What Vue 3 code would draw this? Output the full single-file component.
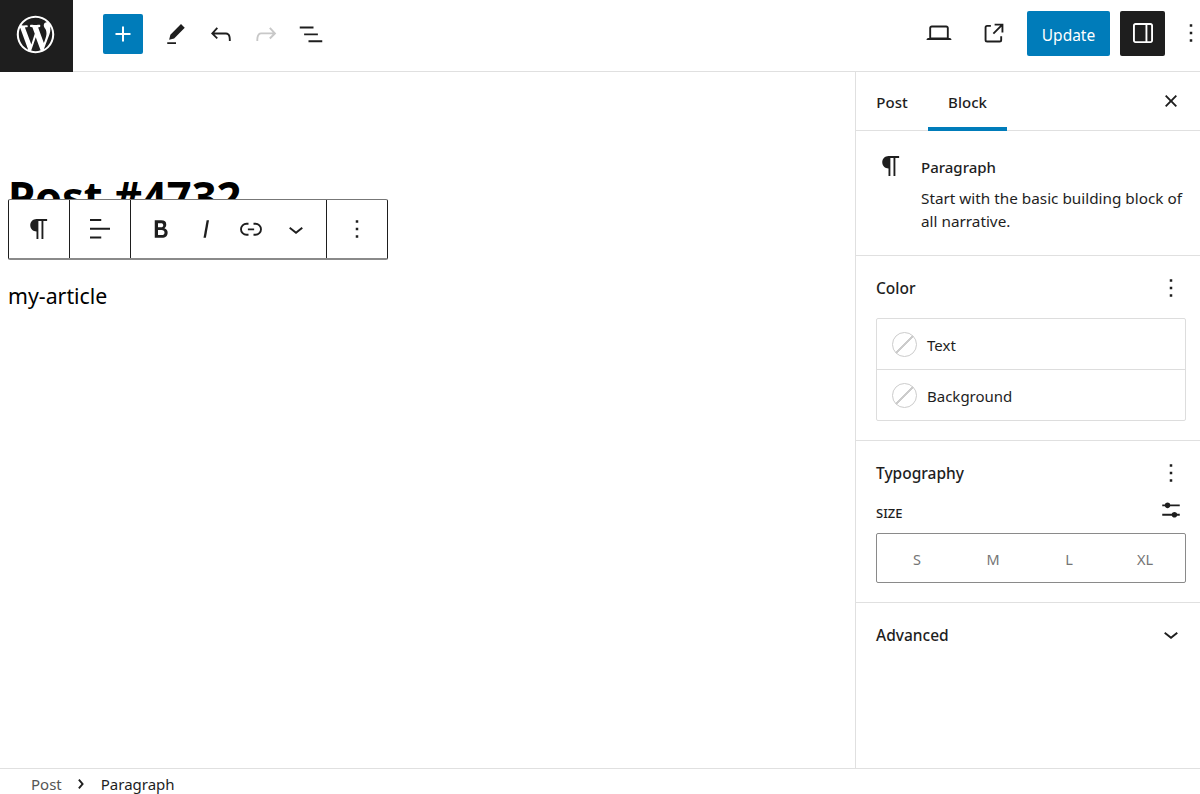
<script setup>
const sizes = ['S', 'M', 'L', 'XL']
const colors = ['Text', 'Background']
const dots = 'M13 19h-2v-2h2v2zm0-6h-2v-2h2v2zm0-6h-2V5h2v2z'
const chevron = 'M17.5 11.6L12 16l-5.5-4.4.9-1.2L12 14l4.5-3.6 1 1.2z'
const para = 'm9.99609 14v-.2251l.00391.0001v6.225h1.5v-14.5h2.5v14.5h1.5v-14.5h3v-1.5h-8.50391c-2.76142 0-5 2.23858-5 5 0 2.7614 2.23858 5 5 5z'
</script>

<template>
  <div class="app">
    <header class="top">
      <div class="logo">
        <svg width="45" height="45" viewBox="-2 -2 24 24" fill="#fff"><path d="M20 10c0-5.51-4.49-10-10-10C4.48 0 0 4.49 0 10c0 5.52 4.48 10 10 10 5.51 0 10-4.48 10-10zM7.78 15.37L4.37 6.22c.55-.02 1.17-.08 1.17-.08.5-.06.44-1.13-.06-1.11 0 0-1.45.11-2.37.11-.18 0-.37 0-.58-.01C4.12 2.69 6.87 1.11 10 1.11c2.33 0 4.45.87 6.05 2.34-.68-.11-1.65.39-1.65 1.58 0 .74.45 1.36.9 2.1.35.61.55 1.36.55 2.46 0 1.49-1.4 5-1.4 5l-3.03-8.37c.54-.02.82-.17.82-.17.5-.05.44-1.25-.06-1.22 0 0-1.44.12-2.38.12-.87 0-2.33-.12-2.33-.12-.5-.03-.56 1.2-.06 1.22l.92.08 1.26 3.41zM17.41 10c.24-.64.74-1.87.43-4.25.7 1.29 1.05 2.71 1.05 4.25 0 3.29-1.73 6.24-4.4 7.78.97-2.59 1.94-5.2 2.92-7.78zM6.1 18.09C3.12 16.65 1.11 13.53 1.11 10c0-1.3.23-2.48.72-3.59C3.25 10.3 4.67 14.2 6.1 18.09zm4.03-6.63l2.58 6.98c-.86.29-1.76.45-2.71.45-.79 0-1.57-.11-2.29-.33.81-2.38 1.62-4.74 2.42-7.1z"/></svg>
      </div>
      <div class="tools">
        <div class="plus"><svg class="ic" viewBox="0 0 24 24" fill="#fff"><path d="M18 11.2h-5.2V6h-1.6v5.2H6v1.6h5.2V18h1.6v-5.2H18z"/></svg></div>
        <div class="tool first"><svg class="ic" viewBox="0 0 24 24"><path d="m19 7-3-3-8.5 8.5-1 4 4-1L19 7Zm-7 11.5H5V20h7v-1.5Z"/></svg></div>
        <div class="tool"><svg class="ic" viewBox="0 0 24 24"><path d="M18.3 11.7c-.6-.6-1.4-.9-2.3-.9H6.7l2.9-3.3-1.1-1-4.5 5L8.5 16l1-1-2.7-2.7H16c.5 0 .9.2 1.3.5 1 1 1 3.4 1 4.5v.3h1.5v-.2c0-1.5 0-4.3-1.5-5.7z"/></svg></div>
        <div class="tool off"><svg class="ic" viewBox="0 0 24 24"><path d="M15.6 6.5l-1.1 1 2.9 3.3H8c-.9 0-1.7.3-2.3.9-1.4 1.5-1.4 4.2-1.4 5.6v.2h1.5v-.3c0-1.1 0-3.5 1-4.5.3-.3.7-.5 1.3-.5h9.2L14.5 15l1.1 1.1 4.6-4.6-4.6-5z"/></svg></div>
        <div class="tool"><svg class="ic" viewBox="0 0 24 24"><path d="M3 6h11v1.5H3V6Zm3.5 5.5h11V13h-11v-1.5ZM21 17H10v1.5h11V17Z"/></svg></div>
      </div>
      <div class="actions">
        <div class="tool"><svg class="ic" viewBox="0 0 24 24"><path d="M20.5 16h-.7V8c0-1.1-.9-2-2-2H6.2c-1.1 0-2 .9-2 2v8h-.7c-.8 0-1.5.7-1.5 1.5h20c0-.8-.7-1.5-1.5-1.5zM5.7 8c0-.3.2-.5.5-.5h11.6c.3 0 .5.2.5.5v7.6H5.7V8z"/></svg></div>
        <div class="tool ext"><svg class="ic" viewBox="0 0 24 24"><path d="M19.5 4.5h-7V6h4.44l-5.97 5.97 1.06 1.06L18 7.06v4.44h1.5v-7Zm-13 1a2 2 0 0 0-2 2v10a2 2 0 0 0 2 2h10a2 2 0 0 0 2-2v-3H17v3a.5.5 0 0 1-.5.5h-10a.5.5 0 0 1-.5-.5v-10a.5.5 0 0 1 .5-.5h3V5.5h-3Z"/></svg></div>
        <div class="update">Update</div>
        <div class="panel"><svg class="ic" viewBox="0 0 24 24" fill="#fff"><path d="M18 4H6c-1.1 0-2 .9-2 2v12c0 1.1.9 2 2 2h12c1.1 0 2-.9 2-2V6c0-1.1-.9-2-2-2zm-4 14.5H6c-.3 0-.5-.2-.5-.5V6c0-.3.2-.5.5-.5h8v13zm4.5-.5c0 .3-.2.5-.5.5h-2.5v-13H18c.3 0 .5.2.5.5v12z"/></svg></div>
        <div class="tool more"><svg class="ic" viewBox="0 0 24 24"><path :d="dots"/></svg></div>
      </div>
    </header>

    <div class="body">
      <main class="editor">
        <h1 class="title">Post #4732</h1>
        <p class="text">my-article</p>
        <div class="bar">
          <div class="seg w61"><svg class="ic" viewBox="0 0 24 24"><path :d="para"/></svg></div>
          <div class="seg w61"><svg class="ic" viewBox="0 0 24 24"><path d="M13 5.5H4V4h9v1.5Zm7 7H4V11h16v1.5Zm-7 7H4V18h9v1.5Z"/></svg></div>
          <div class="seg fmt">
            <svg class="ic" viewBox="0 0 24 24"><path d="M14.7 11.3c1-.6 1.5-1.6 1.5-3 0-2.3-1.3-3.4-4-3.4H7v14h5.8c1.4 0 2.5-.3 3.3-1 .8-.7 1.2-1.7 1.2-2.9.1-1.9-.8-3.1-2.6-3.7zm-5.1-4h2.3c.6 0 1.1.1 1.4.4.3.3.5.7.5 1.2s-.2 1-.5 1.2c-.3.3-.8.4-1.4.4H9.6V7.3zm4.6 9c-.4.3-1 .4-1.7.4H9.6v-3.9h2.9c.7 0 1.3.2 1.7.5.4.3.6.8.6 1.5s-.2 1.2-.6 1.5z"/></svg>
            <svg class="ic" viewBox="0 0 24 24"><path d="M12.5 5L10 19h1.9l2.5-14z"/></svg>
            <svg class="ic" viewBox="0 0 24 24"><path d="M10 17.389H8.444A5.194 5.194 0 1 1 8.444 7H10v1.5H8.444a3.694 3.694 0 0 0 0 7.389H10v1.5ZM14 7h1.556a5.194 5.194 0 0 1 0 10.39H14v-1.5h1.556a3.694 3.694 0 0 0 0-7.39H14V7Zm-4.5 6h5v-1.5h-5V13Z"/></svg>
            <svg class="ic" viewBox="0 0 24 24"><path :d="chevron"/></svg>
          </div>
          <div class="seg last"><svg class="ic" viewBox="0 0 24 24"><path :d="dots"/></svg></div>
        </div>
      </main>

      <aside class="side">
        <div class="tabs">
          <div class="tab">Post</div>
          <div class="tab on">Block</div>
          <svg class="ic close" viewBox="0 0 24 24"><path d="M12 13.06l3.712 3.713 1.061-1.06L13.061 12l3.712-3.712-1.06-1.06L12 10.938 8.288 7.227l-1.061 1.06L10.939 12l-3.712 3.712 1.06 1.061L12 13.061z"/></svg>
        </div>

        <section class="card">
          <svg class="ic" viewBox="0 0 24 24"><path :d="para"/></svg>
          <div class="card-text">
            <div class="card-title">Paragraph</div>
            <div class="card-desc">Start with the basic building block of all narrative.</div>
          </div>
        </section>

        <section class="panel-sec color">
          <div class="sec-head"><span>Color</span><svg class="ic" viewBox="0 0 24 24"><path :d="dots"/></svg></div>
          <div class="color-box">
            <div v-for="c in colors" :key="c" class="color-row">
              <span class="swatch"></span>
              <span class="color-label">{{ c }}</span>
            </div>
          </div>
        </section>

        <section class="panel-sec typo">
          <div class="sec-head"><span>Typography</span><svg class="ic" viewBox="0 0 24 24"><path :d="dots"/></svg></div>
          <div class="size-head">
            <span>SIZE</span>
            <svg class="ic" viewBox="0 0 24 24"><path d="m19 7.5h-7.628c-.3089-.87389-1.1423-1.5-2.122-1.5-.97966 0-1.81309.62611-2.12197 1.5h-2.12803v1.5h2.12803c.30888.87389 1.14231 1.5 2.12197 1.5.97971 0 1.81311-.62611 2.12201-1.5h7.628z"/><path d="m19 15h-2.128c-.3089-.8739-1.1423-1.5-2.122-1.5s-1.8131.6261-2.122 1.5h-7.628v1.5h7.628c.3089.8739 1.1423 1.5 2.122 1.5s1.8131-.6261 2.122-1.5h2.128z"/></svg>
          </div>
          <div class="size-box">
            <span v-for="s in sizes" :key="s">{{ s }}</span>
          </div>
        </section>

        <section class="adv">
          <span>Advanced</span>
          <svg class="ic" viewBox="0 0 24 24"><path :d="chevron"/></svg>
        </section>
      </aside>
    </div>

    <footer class="crumbs">
      <span class="crumb-post">Post</span>
      <svg class="crumb-ic" viewBox="0 0 24 24"><path d="M10.8622 8.04053L14.2805 12.0286L10.8622 16.0167L9.72327 15.0405L12.3049 12.0286L9.72327 9.01672L10.8622 8.04053Z"/></svg>
      <span>Paragraph</span>
    </footer>
  </div>
</template>

<style>
html, body { margin: 0; overflow: hidden; background: #fff; }
</style>

<style scoped>
.app {
  width: 1200px;
  height: 794px;
  display: flex;
  flex-direction: column;
  overflow: hidden;
  font-family: "Noto Sans", "Open Sans", sans-serif;
  font-size: 15px;
  color: #1e1e1e;
}
.ic { width: 30px; height: 30px; fill: #1e1e1e; flex: none; display: block; }
.top {
  height: 72px;
  box-sizing: border-box;
  border-bottom: 1px solid #e0e0e0;
  display: flex;
  align-items: center;
  flex: none;
}
.logo {
  width: 73px;
  height: 72px;
  box-sizing: border-box;
  padding: 12px 0 0 13px;
  background: #1e1e1e;
  margin-bottom: -1px;
  align-self: flex-start;
  flex: none;
}
.logo svg { display: block; }
.tools { display: flex; align-items: center; margin-left: 30px; margin-top: -3px; }
.plus {
  width: 40px;
  height: 40px;
  border-radius: 2px;
  background: #007cba;
  display: flex;
  align-items: center;
  justify-content: center;
}
.plus .ic { fill: #fff; }
.tool { width: 45px; height: 45px; display: flex; align-items: center; justify-content: center; flex: none; }
.tool.first { margin-left: 10px; }
.tool.off .ic { fill: #c8c8c8; }
.actions { display: flex; align-items: center; margin-left: auto; margin-right: -13px; margin-top: -5px; }
.tool.ext { margin-left: 10px; margin-right: 11px; }
.update {
  width: 83px;
  height: 45px;
  border-radius: 2px;
  background: #007cba;
  color: #fff;
  display: flex;
  align-items: center;
  justify-content: center;
  font-size: 15.5px;
  padding-top: 4px;
  box-sizing: border-box;
}
.panel {
  width: 45px;
  height: 45px;
  border-radius: 2px;
  background: #1e1e1e;
  margin-left: 10px;
  display: flex;
  align-items: center;
  justify-content: center;
}
.panel .ic { fill: #fff; }
.tool.more { margin-left: 3px; }
.body { flex: 1; display: flex; min-height: 0; }
.editor { flex: 1; position: relative; min-width: 0; padding: 0 8px; color: #000; }
.title {
  margin: 99px 0 0 0;
  font-size: 43.4px;
  line-height: 52px;
  font-weight: 700;
  letter-spacing: 0;
}
.text { margin: 58px 0 0; font-size: 21.3px; line-height: 30px; }
.bar {
  position: absolute;
  left: 8px;
  top: 127px;
  width: 380px;
  height: 61px;
  box-sizing: border-box;
  border: 1px solid #1e1e1e;
  border-top-color: #777;
  border-bottom: 2px solid #8a8a8a;
  border-radius: 2px;
  background: #fff;
  display: flex;
}
.seg { display: flex; align-items: center; justify-content: center; border-right: 1px solid #1e1e1e; flex: none; color: #1e1e1e; }
.w61 { width: 61px; box-sizing: border-box; height: 100%; }
.fmt { width: 196px; justify-content: flex-start; padding-left: 15px; gap: 15px; box-sizing: border-box; }
.last { border-right: 0; flex: 1; }
.side { width: 345px; flex: none; box-sizing: border-box; border-left: 1px solid #e0e0e0; }
.tabs {
  height: 59px;
  box-sizing: border-box;
  border-bottom: 1px solid #e0e0e0;
  display: flex;
  align-items: stretch;
  padding-left: 0;
  position: relative;
}
.tab { width: 72px; display: flex; align-items: center; justify-content: center; font-weight: 500; font-size: 15px; padding-top: 2px; box-sizing: border-box; position: relative; }
.tab.on { margin-left: 0; width: 79px; }
.tab.on::after {
  content: "";
  position: absolute;
  left: 0;
  right: 0;
  bottom: -1px;
  height: 4px;
  background: #007cba;
}
.close { position: absolute; right: 14px; top: 14px; }
.card {
  height: 125px;
  box-sizing: border-box;
  border-bottom: 1px solid #e0e0e0;
  padding: 20px 10px 0 20px;
  display: flex;
  gap: 15px;
}
.card-text { flex: 1; padding-top: 5px; }
.card-title { font-weight: 500; font-size: 15px; line-height: 22px; }
.card-desc { font-size: 15.3px; line-height: 23px; margin-top: 9px; }
.panel-sec { box-sizing: border-box; border-bottom: 1px solid #e0e0e0; padding: 0 14px 0 20px; }
.color { height: 185px; }
.typo { height: 162px; }
.sec-head {
  display: flex;
  justify-content: space-between;
  align-items: center;
  font-weight: 500;
  font-size: 15.5px;
  height: 30px;
  padding-top: 17px;
}
.color-box {
  margin-top: 15px;
  width: 310px;
  height: 103px;
  box-sizing: border-box;
  border: 1px solid #ddd;
  border-radius: 2px;
}
.color-row {
  height: 50px;
  box-sizing: border-box;
  display: flex;
  align-items: center;
  gap: 10px;
  padding-left: 15px;
  font-size: 15px;
}
.color-row + .color-row { height: 51px; border-top: 1px solid #ddd; }
.color-label { padding-top: 2px; }
.swatch {
  width: 25px;
  height: 25px;
  box-sizing: border-box;
  border-radius: 50%;
  border: 1px solid #ccc;
  background: linear-gradient(-45deg, transparent 47%, #ccc 47%, #ccc 53%, transparent 53%);
  flex: none;
}
.size-head {
  display: flex;
  justify-content: space-between;
  align-items: center;
  margin-top: 10px;
  height: 30px;
  font-size: 13px;
  font-weight: 500;
}
.size-head .ic { margin-top: -6px; }
.size-box {
  margin-top: 5px;
  width: 310px;
  height: 50px;
  box-sizing: border-box;
  border: 1px solid #8a8a8a;
  border-radius: 2px;
  padding: 1px 2px 0;
  display: grid;
  grid-template-columns: repeat(4, 76px);
  align-items: center;
  justify-items: center;
  color: #757575;
  font-size: 14.5px;
}
.adv {
  height: 64px;
  box-sizing: border-box;
  padding: 0 14px 0 20px;
  display: flex;
  justify-content: space-between;
  align-items: center;
  font-weight: 500;
  font-size: 15.5px;
}
.adv .ic { margin-top: -2px; }
.crumbs {
  height: 26px;
  flex: none;
  box-sizing: border-box;
  border-top: 1px solid #e0e0e0;
  padding: 5px 0 0 31px;
  display: flex;
  align-items: center;
  font-size: 15px;
}
.crumb-post { color: #555; }
.crumb-ic { width: 30px; height: 30px; fill: #1e1e1e; margin: -1px 5px 0 4px; flex: none; }
</style>
